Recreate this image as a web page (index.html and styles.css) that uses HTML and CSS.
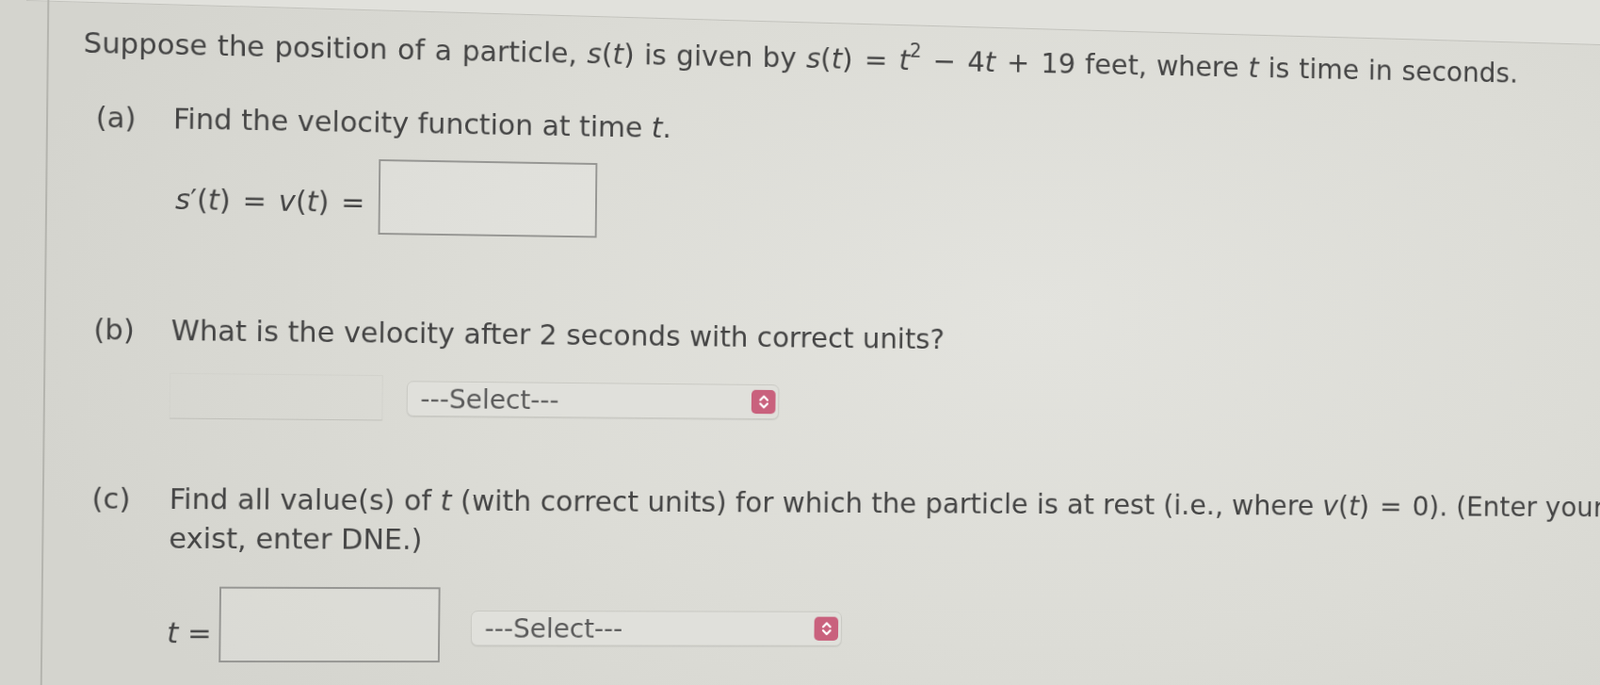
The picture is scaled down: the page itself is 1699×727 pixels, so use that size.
FILE: index.html
```html
<!DOCTYPE html>
<html lang="en">
<head>
    <meta charset="UTF-8">
    <meta name="viewport" content="width=device-width, initial-scale=1.0">
    <title>Particle Position - Question</title>
    <link rel="stylesheet" href="styles.css">
</head>
<body>
    <div class="screen-edge"></div>
    <div class="page">
        <div class="panel">
            <p class="intro">Suppose the position of a particle, <i>s</i>(<i>t</i>) is given by <i>s</i>(<i>t</i>)<span class="op">=</span><i>t</i><sup>2</sup><span class="op">&minus;</span>4<i>t</i><span class="op">+</span>19 feet, where <i>t</i> is time in seconds.</p>

            <div class="part part-a">
                <div class="part-head">
                    <span class="part-label">(a)</span>
                    <span class="part-text">Find the velocity function at time <i>t</i>.</span>
                </div>
                <div class="answer-row row-a">
                    <span class="math-label"><i>s</i>&prime;(<i>t</i>)<span class="op">=</span><i>v</i>(<i>t</i>)<span class="op">=</span></span>
                    <span class="answer-box"></span>
                </div>
            </div>

            <div class="part part-b">
                <div class="part-head">
                    <span class="part-label">(b)</span>
                    <span class="part-text">What is the velocity after 2 seconds with correct units?</span>
                </div>
                <div class="answer-row row-b">
                    <span class="answer-input"></span>
                    <div class="select">
                        <span>---Select---</span>
                        <span class="select-btn">
                            <svg width="16" height="22" viewBox="0 0 16 22"><path d="M4 9 L8 5 L12 9 M4 13 L8 17 L12 13" fill="none" stroke="#fff" stroke-width="2.4" stroke-linecap="round" stroke-linejoin="round"/></svg>
                        </span>
                    </div>
                </div>
            </div>

            <div class="part part-c">
                <div class="part-head">
                    <span class="part-label">(c)</span>
                    <span class="part-text">Find all value(s) of <i>t</i> (with correct units) for which the particle is at rest (i.e., where <i>v</i>(<i>t</i>)<span class="op">=</span>0). (Enter your answers as a comma-separated list. If an answer does not<br>exist, enter DNE.)</span>
                </div>
                <div class="answer-row row-c">
                    <span class="math-label"><i>t</i> =</span>
                    <span class="answer-box"></span>
                    <div class="select">
                        <span>---Select---</span>
                        <span class="select-btn">
                            <svg width="16" height="22" viewBox="0 0 16 22"><path d="M4 9 L8 5 L12 9 M4 13 L8 17 L12 13" fill="none" stroke="#fff" stroke-width="2.4" stroke-linecap="round" stroke-linejoin="round"/></svg>
                        </span>
                    </div>
                </div>
            </div>
        </div>
    </div>
</body>
</html>
```

FILE: styles.css
```css
body {
    margin: 0;
    height: 727px;
    overflow: hidden;
    position: relative;
    background: radial-gradient(ellipse 1100px 650px at 1100px 330px, #e3e3de 0%, #dcdcd6 55%, #d4d4ce 100%);
    font-family: "DejaVu Sans", Verdana, sans-serif;
    color: #444;
}
/* edge of the monitor frame, runs across the top */
.screen-edge {
    position: absolute;
    left: 28px;
    top: -80px;
    width: 1720px;
    height: 80px;
    background: #e1e1dc;
    border-bottom: 1px solid #c2c2bc;
    transform-origin: 0 100%;
    transform: rotate(1.61deg);
}
/* the screen was photographed at a slight angle */
.page {
    width: 2200px;
    height: 820px;
    transform-origin: 0 717px;
    transform: translateY(-6px) perspective(1000px) rotateY(1.82deg) skewX(-0.6deg);
}
.panel {
    margin-left: 43px;
    height: 100%;
    box-sizing: border-box;
    padding: 28px 0 0 37px;
    border-left: 2px solid #b4b4ae;
}
.intro {
    margin: 0;
    font-size: 31px;
    line-height: 42px;
    word-spacing: 1px;
    white-space: nowrap;
}
.intro sup {
    font-size: 21px;
    line-height: 0;
    vertical-align: 14px;
}
.op {
    margin: 0 13px;
}
.part {
    margin-left: 14px;
}
.part-a {
    margin-top: 37px;
}
.part-b {
    margin-top: 84px;
}
.part-c {
    margin-top: 64px;
}
.part-head {
    display: flex;
    font-size: 31px;
    line-height: 42px;
}
.part-label {
    width: 83px;
    flex: none;
}
.part-text {
    white-space: nowrap;
}
.part-text .op {
    margin: 0 12px;
}
.answer-row {
    display: flex;
    align-items: center;
    margin-left: 80px;
}
.row-a {
    margin-top: 19px;
}
.row-b {
    margin-top: 25px;
}
.row-c {
    margin-top: 31px;
}
.math-label {
    flex: none;
    box-sizing: border-box;
    padding-top: 16px;
    font-size: 31px;
    line-height: 42px;
    white-space: nowrap;
}
.row-a .math-label {
    width: 226px;
    padding-top: 10px;
    padding-left: 6px;
}
.row-c .math-label {
    width: 58px;
    padding-left: 2px;
}
.answer-box {
    flex: none;
    width: 240px;
    height: 81px;
    box-sizing: border-box;
    border: 2px solid #969693;
    background: rgba(255, 255, 255, 0.12);
}
.answer-input {
    flex: none;
    width: 231px;
    height: 49px;
    margin-left: 2px;
    box-sizing: border-box;
    border: 1px solid #d2d2cc;
    border-bottom-color: #c0c0ba;
}
.select {
    flex: none;
    width: 412px;
    height: 38px;
    box-sizing: border-box;
    display: flex;
    align-items: center;
    justify-content: space-between;
    padding: 0 3px 0 14px;
    border: 1px solid #c9c9c3;
    border-radius: 7px;
    background: #e0e0db;
    box-shadow: 0 1px 1px rgba(0, 0, 0, 0.08);
    font-size: 29px;
    line-height: 32px;
    color: #5a5a5a;
}
.row-b .select {
    margin-left: 26px;
}
.row-c .select {
    margin-left: 34px;
    margin-top: 7px;
}
.select-btn {
    width: 27px;
    height: 26px;
    border-radius: 5px;
    background: #c9617d;
    display: flex;
    align-items: center;
    justify-content: center;
}
```
